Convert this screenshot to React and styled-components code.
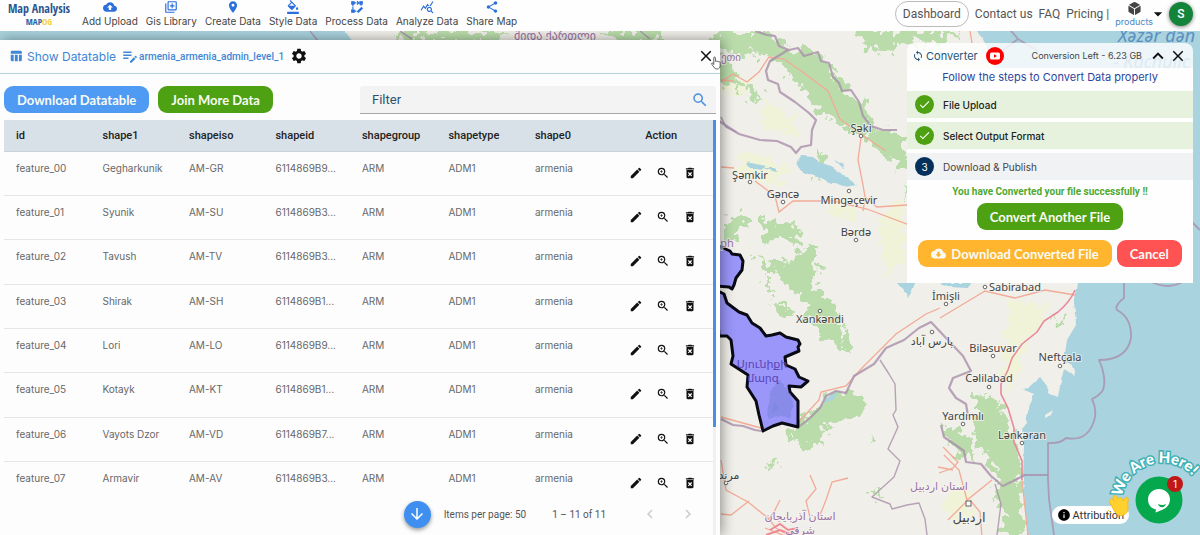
import React from "react";
import styled, { createGlobalStyle } from "styled-components";
import {
	MdCloudUpload,
	MdOutlineLibraryAdd,
	MdLocationOn,
	MdFormatColorFill,
	MdQueryStats,
	MdShare,
	MdTableChart,
	MdEditNote,
	MdSettings,
	MdClose,
	MdSearch,
	MdEdit,
	MdZoomIn,
	MdDeleteForever,
	MdArrowDownward,
	MdChevronLeft,
	MdChevronRight,
	MdArrowDropDown,
	MdLoop,
	MdExpandLess,
	MdCheck,
	MdCloudDownload,
	MdInfo,
} from "react-icons/md";
import { IoCube } from "react-icons/io5";

const columns = ["id", "shape1", "shapeiso", "shapeid", "shapegroup", "shapetype", "shape0"];

const rows = [
	["feature_00", "Gegharkunik", "AM-GR", "6114869B9..."],
	["feature_01", "Syunik", "AM-SU", "6114869B3..."],
	["feature_02", "Tavush", "AM-TV", "6114869B3..."],
	["feature_03", "Shirak", "AM-SH", "6114869B1..."],
	["feature_04", "Lori", "AM-LO", "6114869B9..."],
	["feature_05", "Kotayk", "AM-KT", "6114869B1..."],
	["feature_06", "Vayots Dzor", "AM-VD", "6114869B7..."],
	["feature_07", "Armavir", "AM-AV", "6114869B3..."],
].map((row) => [...row, "ARM", "ADM1", "armenia"]);

const tools = [
	{ label: "Add Upload", icon: <MdCloudUpload /> },
	{ label: "Gis Library", icon: <MdOutlineLibraryAdd /> },
	{ label: "Create Data", icon: <MdLocationOn /> },
	{ label: "Style Data", icon: <MdFormatColorFill /> },
	{ label: "Process Data", icon: <ProcessIcon /> },
	{ label: "Analyze Data", icon: <MdQueryStats /> },
	{ label: "Share Map", icon: <MdShare /> },
];

const steps = [
	{ label: "File Upload", done: true },
	{ label: "Select Output Format", done: true },
	{ label: "Download & Publish", done: false },
];

// [name, label x, label y, dot x, dot y]
const cities = [
	["Şəki", 861, 132, 861, 136],
	["Şəmkir", 750, 179, 750, 182],
	["Gəncə", 783, 198, 783, 202],
	["Mingəçevir", 849, 204, 849, 191],
	["Bərdə", 856, 236, 856, 240],
	["Xankəndi", 820, 323, 820, 311],
	["İmişli", 946, 300, 946, 304],
	["Sabirabad", 1015, 291, 985, 287],
	["Biləsuvar", 993, 352, 993, 356],
	["Neftçala", 1060, 361, 1060, 366],
	["Cəlilabad", 989, 382, 989, 387],
	["Yardımlı", 963, 420, 963, 424],
	["Lənkəran", 1022, 439, 1022, 443],
	["پارس آباد", 932, 345, 932, 332],
	["مرند", 729, 479, 726, 483],
];

export default function App() {
	return (
		<Page>
			<GlobalStyle />
			<Header />
			<Stage>
				<MapCanvas />
				<DataPanel />
				<Converter />
				<ChatCorner />
			</Stage>
		</Page>
	);
}

function Header() {
	return (
		<TopBar>
			<Brand>
				<BrandTitle>Map Analysis</BrandTitle>
				<BrandSub>
					MAP<span>OG</span>
				</BrandSub>
			</Brand>
			<Tools>
				{tools.map((tool) => (
					<ToolButton key={tool.label}>
						{tool.icon}
						{tool.label}
					</ToolButton>
				))}
			</Tools>
			<Links>
				<DashboardLink href="#dashboard">Dashboard</DashboardLink>
				<TopLink href="#contact">Contact us</TopLink>
				<TopLink href="#faq">FAQ</TopLink>
				<TopLink href="#pricing">Pricing |</TopLink>
				<ProductsButton>
					<span>
						<IoCube />
						products
					</span>
					<MdArrowDropDown />
				</ProductsButton>
				<Avatar>S</Avatar>
			</Links>
		</TopBar>
	);
}

function DataPanel() {
	return (
		<Panel>
			<PanelHeader>
				<ShowLink href="#datatable">
					<MdTableChart /> Show Datatable
				</ShowLink>
				<LayerLink href="#layer">
					<MdEditNote /> armenia_armenia_admin_level_1
				</LayerLink>
				<IconButton $size={18} aria-label="Settings">
					<MdSettings />
				</IconButton>
				<PanelClose $size={18} aria-label="Close">
					<MdClose />
					<Pointer viewBox="0 0 16 20">
						<path
							d="M5 12V3.2c0-1.6 2.2-1.6 2.2 0V8c.4-1 2-.9 2.2.2.5-.9 2-.7 2.2.5.6-.8 1.9-.4 1.9.8v4c0 2.5-1.300 4.500-4 4.500-2.500 0-3.500-1-4.500-2.700L2.300 11.500c-.7-1.200.9-2.300 1.700-1.100z"
							fill="#fff"
							stroke="#333"
						/>
					</Pointer>
				</PanelClose>
			</PanelHeader>
			<PanelTools>
				<Button $color="#4f9af2">Download Datatable</Button>
				<Button $color="#4ea112">Join More Data</Button>
				<FilterBox>
					<input aria-label="Filter" placeholder="Filter" />
					<MdSearch />
				</FilterBox>
			</PanelTools>
			<TableArea>
				<TableClip>
					<Table>
						<colgroup>
							{columns.map((name) => (
								<DataCol key={name} />
							))}
							<col />
						</colgroup>
						<thead>
							<tr>
								{columns.map((name) => (
									<th key={name}>{name}</th>
								))}
								<ActionHead>Action</ActionHead>
							</tr>
						</thead>
						<tbody>
							{rows.map((row) => (
								<tr key={row[0]}>
									{row.map((value, i) => (
										<td key={columns[i]}>{value}</td>
									))}
									<td>
										<Actions>
											<IconButton $size={14} aria-label="Edit">
												<MdEdit />
											</IconButton>
											<IconButton $size={14} aria-label="Zoom">
												<MdZoomIn />
											</IconButton>
											<IconButton $size={14} aria-label="Delete">
												<MdDeleteForever />
											</IconButton>
										</Actions>
									</td>
								</tr>
							))}
						</tbody>
					</Table>
				</TableClip>
				<Paginator>
					<DownButton aria-label="Show more">
						<MdArrowDownward />
					</DownButton>
					<span>Items per page: 50</span>
					<span>1 – 11 of 11</span>
					<Pages>
						<IconButton $size={18} disabled aria-label="Previous page">
							<MdChevronLeft />
						</IconButton>
						<IconButton $size={18} disabled aria-label="Next page">
							<MdChevronRight />
						</IconButton>
					</Pages>
				</Paginator>
				<ScrollTrack>
					<ScrollThumb />
				</ScrollTrack>
			</TableArea>
		</Panel>
	);
}

function Converter() {
	return (
		<Card>
			<CardHeader>
				<MdLoop />
				<CardTitle>Converter</CardTitle>
				<VideoBadge aria-label="Watch video">
					<svg viewBox="0 0 18 18" width="18" height="18">
						<rect x="4" y="5.500" width="10" height="7" rx="1.500" fill="#fff" />
						<path d="M8 7.300v3.400l3-1.700z" fill="#f00" />
					</svg>
				</VideoBadge>
				<Quota>Conversion Left - 6.23 GB</Quota>
				<IconButton $size={22} aria-label="Collapse">
					<MdExpandLess />
				</IconButton>
				<IconButton $size={18} aria-label="Close converter">
					<MdClose />
				</IconButton>
			</CardHeader>
			<CardBody>
				<Hint>Follow the steps to Convert Data properly</Hint>
				<Steps>
					{steps.map((step, i) => (
						<Step key={step.label} $done={step.done}>
							<StepMark $done={step.done}>{step.done ? <MdCheck /> : i + 1}</StepMark>
							{step.label}
						</Step>
					))}
				</Steps>
				<Success>You have Converted your file successfully !!</Success>
				<Button $color="#4ea112">Convert Another File</Button>
				<ButtonRow>
					<Button $color="#ffb52e">
						<MdCloudDownload />
						Download Converted File
					</Button>
					<Button $color="#ff5252">Cancel</Button>
				</ButtonRow>
			</CardBody>
		</Card>
	);
}

function ChatCorner() {
	return (
		<Corner>
			<Attribution>
				<MdInfo />
				Attribution
			</Attribution>
			<ChatButton aria-label="Open chat">
				<svg viewBox="0 0 96 88" width="96" height="88" overflow="visible">
					<defs>
						<path id="arc" d="M18 50 A 41 41 0 0 1 98 46" />
					</defs>
					<ArcText>
						<textPath href="#arc">We Are Here!</textPath>
					</ArcText>
					<g fill="#ffd02e" stroke="#f4bd1c" transform="translate(3 1)">
						<path d="M3 52c1-2 3-1 4 1l-1-3c0-3 3-3 4-1l1 2c1-2 3-2 4 0l1 2 2-3c2-2 4 0 3 3-1 5 2 10-3 13-4 3-8 1-10-2l-5-9c-1-1-1-2 0-3z" />
						<path d="M1 62l4 4M1 66l2 2" fill="none" />
					</g>
					<circle cx="55" cy="53" r="23.500" fill="#06a84d" />
					<path d="M55 42c6 0 11 4.500 11 10.500 0 5-3.500 8.500-7 10-2.500 1.200-4.500 2-7.500 3l.5-3c-4.500-.8-8-4.500-8-10C44 46.500 49 42 55 42z" fill="#fff" />
					<path d="M54 57c3 1.500 6 1.300 8 0-1 4-6.500 4.500-8 0z" fill="#06a84d" />
					<circle cx="71" cy="37" r="8" fill="#c01818" />
					<BadgeText x="71" y="41">
						1
					</BadgeText>
				</svg>
			</ChatButton>
		</Corner>
	);
}

function ProcessIcon() {
	return (
		<svg viewBox="0 0 24 24" fill="none" stroke="currentColor" strokeWidth="2">
			<path d="M5 7v10M7 5h10M7 19h4M19 7v3" strokeDasharray="4 1" />
			<path d="M12 2l3 3-3 3" />
			<path d="M13 21l8-8" strokeWidth="4" />
			<g fill="currentColor" stroke="none">
				<rect x="2" y="2" width="6" height="6" />
				<rect x="16" y="2" width="6" height="6" />
				<rect x="2" y="16" width="6" height="6" />
			</g>
		</svg>
	);
}

function MapCanvas() {
	return (
		<MapSvg viewBox="0 31 1200 504" preserveAspectRatio="xMinYMin slice">
			<defs>
				<filter id="ragged" x="-5%" y="-5%" width="110%" height="110%">
					<feTurbulence type="fractalNoise" baseFrequency="0.11" numOctaves="3" seed="4" />
					<feDisplacementMap in="SourceGraphic" scale="26" xChannelSelector="R" yChannelSelector="G" />
				</filter>
				<filter id="coast">
					<feTurbulence type="fractalNoise" baseFrequency="0.12" numOctaves="2" seed="8" />
					<feDisplacementMap in="SourceGraphic" scale="4" xChannelSelector="R" yChannelSelector="G" />
				</filter>
			</defs>
			<rect y="31" width="1200" height="504" fill="#f0efe9" />
			{/* pale farmland */}
			<g fill="#f1f3d8" filter="url(#ragged)">
				<path d="M760 95l30 20 10 20-35-5zM830 200l30 5-5 15-25-5zM1010 300l40 5-20 35-20 55-10-20zM721 70l30 10-5 15-25-5zM940 505l25-25 10 30-20 20z" />
				<path d="M745 150l50 20-20 15-40-10zM880 215l26-15v60l-20 20z" />
			</g>
			{/* forests */}
			<g fill="#b9dcaa" filter="url(#ragged)">
				<path d="M395 31h115l-20 12h-85zM600 31h60v10h-40zM712 31h55l20 16 32 6 16 19 12 20 20 12 6 22 32 10v35l-25-20-22-18-30-14-26-28-20-28-24-10-18 2-24-8z" />
				<path d="M855 31h110l-30 14-30-4-20 12-20-8zM721 52l10 10 12 30-22-8z" />
				<path d="M745 92l14-2 4 8-12 3zM722 222l22-10 6 8-10 18-18 4zM760 215l15 8 22 2-3 14-22-2-2 8-10-4zM793 233l8-2-2 14-6-4z" />
				<path d="M754 258l38 4 18-18 8 20-4 20 20 20 14 30-5 12-20-10-12-16-10-20-16-18zM764 270l10 24-6-2zM770 300l24 10-8 10zM816 180l8-25-6-6-4 10zM825 325l22 10 4 16-14-6-10-8z" />
				<path d="M790 430l22-18 20-16 22-5 10 8 2 12-18 8-20 6-12 22-12 2-20-18zM870 434l8 2-6 3zM767 465l8-4 2 8zM903 190l4-5v15z" />
				<path d="M975 392l20 6 10 20 12 20 4 42-14 4-12-12-16-26-4-18zM945 425l18 8 16 30-20-8-14-18zM995 484h26l4 51h-22l2-22-8-10zM872 491l10 2-6 5zM1054 315l10 3-5 8z" />
			</g>
			<g fill="#a9d3de">
				<g filter="url(#coast)">
					<path d="M974 25L985 43 1077 283 1074 300 1076 325 1067 340 1064 360 1072 364 1075 376 1064 369 1060 385 1058 397 1048 393 1047 386 1040 377 1028 388 1022 389 1034 394 1030 404 1028 412 1022 428 1024 445 1023 480 1028 545H1210V25z" />
					<path d="M-5 25h345l14 18H-5z" />
					<path d="M801 156l12 1 8 6 12 4 10 8 14 10-14 2-18-7-22-8-8-8zM746 162l20 4-4 4-12-2zM763 168h13v4zM835 160l10 4-2 4zM897 283h18l-3 8-4 7-5-8zM940 283h30l-2 5-18-1z" />
				</g>
				<path d="M828 397l10-5-5 8-10 3zM774 402l5 6-7 5z" />
			</g>
			<path d="M1045 415l8-5-2 5-6 3zM1019 424l6-8 2 7-5 6z" fill="#f0efe9" />
			{/* roads */}
			<g fill="none" stroke="#f3aa97" strokeWidth="1.300">
				<path d="M721 82l12-8 14 8 12-10 10-15 15 2 20 14 24 18 12 28 16 12 30 20M861 138l-3 22 5 25 2 12 12 10 30-2" />
				<path d="M721 167l13 1M755 181l20 15 4 16 14-11h40l34 8 40 15h10M863 211l2-12" />
				<path d="M794 427l25-27 2-8 25-6 16-18 34-34 30-20 14-6M940 318l25-15 20-12 30 7 30-8 30 5" />
				<path d="M721 417l40 11M721 460l5 30 22 12 20 16 8 10 12 7M721 514l10 1 18-14M780 500l-6 12-6 8M810 475l6 14-10 12 4 16M848 478l-16 4-6 18-6 15M943 447l15 15-5 6-14 5M953 470l-15-3M944 455l15 15 8 30 25-20M970 500l10 12 2 25M968 500l-20 20M1022 480l6 55" />
				<path d="M970 31l2 12M721 80l13 1M765 528l18 7" />
			</g>
			<path d="M1075 290Q1070 302 1058 312L1044 321 1037 332 1022 344 1012 358 1008 370 1001 384 1001 394 1008 408 1014 428 1014 442 1022 461V480" fill="none" stroke="#e8899a" strokeWidth="1.600" />
			<g stroke="#ef8a94" fill="none">
				<path d="M770 530l10-6 8 6 10-2M766 535l14-5 14 5" strokeWidth="2" />
			</g>
			{/* borders */}
			<g fill="none" stroke="#a98fab" strokeOpacity="0.8" strokeWidth="2.200" strokeLinejoin="round">
				<path d="M755 31l12 4 8 1 4 10 10 4 9-2 6 8 14-4 3 9 8 2 4 14 6 6 3 8 9-1 8 12 4 14 8 10 12 4h14" />
				<path d="M788 50l-18 11-4 10 2 9 10 4 2 8 15 10 14 11 7 7-4 10-1 15-10 2-5 6-5-6-14-6-17-1-21-6-20-13" />
				<path d="M721 419l12 6 10 1 12 4 6 1M800 426l10-8 10-10 6-12 10-5 10 2 8-17 20-12 12-16 18-8 15-12 12-6 32 34 8 15-18 7-4 10 7 10 10 6 2 12M941 425l3 12 20 14 2 11 15 2 10 12 12 10 12-6 10-5h23" />
				<path d="M1124 283v15q-10 8-7 12 15 8 14 28-4 22-32 22 8 18 4 30-4 6-11 9 8 16-3 32-8 10-23 7-6 6-18 5v36l1 20 5 36M1006 25l12 14-28 21M1018 39l20 12M1150 281q18 10 34 0M1190 220l10 10" strokeWidth="1.800" />
				<path d="M880 360l9 14 6 10 1 26-3 5 5 12-10 22 12 12-6 16-22 20 18 7 2 5 15-4 12-2 6 16 2 16M995 484l6 20-4 31" strokeWidth="1.400" />
				<path d="M721 117l5 10 10 5M640 31l10 8M310 31l8 10M400 31l12 8" strokeWidth="1.600" />
			</g>
			{/* selected layer */}
			<g fill="#7e78ff" fillOpacity="0.750" stroke="#0a0a14" strokeWidth="3" strokeLinejoin="round">
				<path d="M716 245l5 2 9 4 2 3 8 1 3 6-1 9-6 8-2 7-2 4-3-2-13-1z" />
				<path d="M716 290l8 4 3 9 12 9 8 3 5 8 8 5 6 8 6-1 8-2 6 4 12 3 2 4-2 3 1 4-14 6 1 8 9 4 4 8 9 4-7 6-12-1 1 6 8 9v26l-16-4-9 3-10 5-4-16-3-14-9-14 1-12-17-11 2-8-2-16-4-4h-8z" />
			</g>
			<path d="M770 393l10-12 8 8 6 16-4 14-10-4-12 4z" fill="#6f7bd0" fillOpacity="0.4" filter="url(#coast)" />
			<PlaceDots>
				{cities.map(([name, , , x, y]) => (
					<circle key={name} cx={x} cy={y} r="1.800" />
				))}
				<rect x="966" y="501" width="5" height="5" />
			</PlaceDots>
			{cities.map(([name, x, y]) => (
				<MapLabel key={name} x={x} y={y}>
					{name}
				</MapLabel>
			))}
			<MapLabel $size={13} x="969" y="522">
				اردبیل
			</MapLabel>
			<MapLabel $tone="#9a72a5" x="939" y="490">
				استان اردبیل
			</MapLabel>
			<MapLabel $tone="#9a72a5" $size={11} x="800" y="520">
				استان آذربایجان
			</MapLabel>
			<MapLabel $tone="#9a72a5" $size={11} x="800" y="534">
				شرقی
			</MapLabel>
			<MapLabel $tone="#9a72a5" $size={12} x="555" y="40">
				შიდა ქართლი
			</MapLabel>
			<MapLabel $tone="#9a72a5" x="731" y="61">
				ეთი
			</MapLabel>
			<MapLabel $tone="#9a72a5" x="727" y="247">
				ph
			</MapLabel>
			<LayerLabel x="762" y="368">
				Սյունիքի
			</LayerLabel>
			<LayerLabel x="763" y="382">
				մարզ
			</LayerLabel>
			<SeaLabel x="1118" y="42">
				Xəzər dən
			</SeaLabel>
			<SeaLabel x="1113" y="68">
				- Kachulic
			</SeaLabel>
		</MapSvg>
	);
}

const GlobalStyle = createGlobalStyle`
	* {
		box-sizing: border-box;
	}
	body {
		margin: 0;
		font-family: Inter, "Noto Sans", sans-serif;
		overflow: hidden;
	}
	button {
		font: inherit;
		color: inherit;
		padding: 0;
		border: 0;
		background: none;
		cursor: pointer;
	}
	a {
		color: inherit;
		text-decoration: none;
	}
	svg {
		flex: none;
	}
`;

const Page = styled.div`
	display: flex;
	flex-direction: column;
	height: 100vh;
`;

const TopBar = styled.header`
	display: flex;
	align-items: center;
	height: 31px;
	padding: 0 7px 3px 8px;
	background: #fefefe;
`;

const Brand = styled.div`
	display: flex;
	flex-direction: column;
	align-items: center;
	width: 62px;
	margin-right: 12px;
	font-family: "Liberation Sans Narrow", "Open Sans Condensed", Roboto, sans-serif;
	font-weight: 700;
	white-space: nowrap;
`;

const BrandTitle = styled.span`
	color: #2a5590;
	font-size: 12px;
	line-height: 15px;
`;

const BrandSub = styled.span`
	color: #2a62a8;
	font-size: 9px;
	line-height: 12px;

	span {
		color: #f5cf35;
	}
`;

const Tools = styled.nav`
	display: flex;
	gap: 8px;
`;

const ToolButton = styled.button`
	display: flex;
	flex-direction: column;
	align-items: center;
	gap: 1px;
	color: #444;
	font: 10px/13px Inter, sans-serif;
	white-space: nowrap;

	svg {
		width: 14px;
		height: 14px;
		color: #2b6fdc;
	}
`;

const Links = styled.nav`
	display: flex;
	align-items: center;
	gap: 6px;
	margin-left: auto;
	color: #555;
	font: 12px/16px Roboto, sans-serif;
	white-space: nowrap;
`;

const TopLink = styled.a``;

const DashboardLink = styled(TopLink)`
	padding: 4px 7px;
	border: 1px solid #bbb;
	border-radius: 13px;
`;

const ProductsButton = styled.button`
	display: flex;
	align-items: center;
	color: #111;

	span {
		display: flex;
		flex-direction: column;
		align-items: center;
		color: #4a86c8;
		font: 9px/12px Inter, sans-serif;
	}

	span svg {
		width: 15px;
		height: 15px;
		color: #444;
	}

	> svg {
		width: 20px;
		height: 20px;
		margin: 0 -5px;
	}
`;

const Avatar = styled.button`
	width: 24px;
	height: 24px;
	border-radius: 50%;
	background: #15843b;
	box-shadow: 0 1px 4px rgba(0, 0, 0, 0.5);
	color: #fff;
	font-weight: 500;
`;

const Stage = styled.main`
	position: relative;
	display: grid;
	flex: 1;
	grid-template-columns: minmax(0, 3fr) minmax(0, 2fr);
	grid-template-rows: minmax(0, 1fr);
	min-height: 0;
	overflow: hidden;
`;

// the map lies under every panel of the stage
const MapSvg = styled.svg`
	position: absolute;
	inset: 0;
	width: 100%;
	height: 100%;
`;

const MapLabel = styled.text`
	fill: ${(props) => props.$tone || "#444"};
	font: ${(props) => props.$size || 11}px "Noto Sans", "DejaVu Sans", sans-serif;
	text-anchor: middle;
	paint-order: stroke;
	stroke: #f6f5f1;
	stroke-opacity: 0.7;
	stroke-width: 2px;
`;

const LayerLabel = styled.text`
	fill: #5a45b8;
	font: 11px "DejaVu Sans", sans-serif;
	text-anchor: middle;
`;

const SeaLabel = styled.text`
	fill: #5b8fc0;
	font: italic 18px "Noto Sans", sans-serif;
`;

const PlaceDots = styled.g`
	fill: #fff;
	stroke: #666;
	stroke-width: 1px;
`;

const Panel = styled.section`
	position: relative;
	display: flex;
	flex-direction: column;
	margin-top: 9px;
	background: #fdfdfd;
	box-shadow: 2px 0 12px rgba(0, 0, 0, 0.4);
`;

const PanelHeader = styled.div`
	display: flex;
	align-items: center;
	height: 34px;
	padding: 0 5px 1px 9px;
	border-bottom: 1px solid #b4cfdf;
	color: #3f87d6;
`;

const ShowLink = styled.a`
	display: flex;
	align-items: center;
	gap: 4px;
	margin-right: 5px;
	font-size: 12px;

	svg {
		width: 14px;
		height: 14px;
	}
`;

const LayerLink = styled.a`
	display: flex;
	align-items: center;
	margin-right: 6px;
	font: 500 10px Roboto, sans-serif;

	svg {
		width: 18px;
		height: 18px;
	}
`;

const IconButton = styled.button`
	display: flex;
	color: #111;

	svg {
		width: ${(props) => props.$size}px;
		height: ${(props) => props.$size}px;
	}

	&:disabled {
		color: #ccc;
	}
`;

const PanelClose = styled(IconButton)`
	position: relative;
	margin-left: auto;
`;

const Pointer = styled.svg`
	&& {
		position: absolute;
		top: 8px;
		left: 13px;
		width: 12px;
		height: 16px;
	}
`;

const PanelTools = styled.div`
	display: flex;
	gap: 9px;
	padding: 12px 4px 6px;
`;

const Button = styled.button`
	display: flex;
	align-items: center;
	gap: 5px;
	height: 27px;
	padding: 0 13px;
	border-radius: 9px;
	background: ${(props) => props.$color};
	color: #f8fbf4;
	font: 700 13px Lato, sans-serif;
	white-space: nowrap;

	svg {
		width: 15px;
		height: 15px;
	}
`;

const FilterBox = styled.label`
	display: flex;
	align-items: center;
	width: 50%;
	height: 28px;
	margin-left: auto;
	padding: 0 7px 0 12px;
	border-bottom: 1px solid #a8a8a8;
	border-radius: 3px 3px 0 0;
	background: #f3f3f3;
	color: #4a90e2;

	input {
		flex: 1;
		min-width: 0;
		padding: 0;
		border: 0;
		outline: 0;
		background: none;
		font: 13px Roboto, sans-serif;
	}

	input::placeholder {
		color: #2c5270;
		opacity: 1;
	}

	svg {
		width: 18px;
		height: 18px;
	}
`;

const TableArea = styled.div`
	display: grid;
	flex: 1;
	grid-template-columns: minmax(0, 1fr) 3px;
	grid-template-rows: minmax(0, 1fr) 42px;
	min-height: 0;
	padding: 0 4px;
`;

const TableClip = styled.div`
	overflow: hidden;
`;

const Table = styled.table`
	width: 100%;
	border-collapse: collapse;
	table-layout: fixed;
	text-align: left;

	th {
		height: 31px;
		padding: 0 0 0 12px;
		border-bottom: 1px solid #c9d3d9;
		background: #d8e0e8;
		color: #222;
		font: 500 11px Roboto, sans-serif;
	}

	td {
		height: 44px;
		padding: 9px 0 0 12px;
		border-bottom: 1px solid #e6e6e6;
		color: #686868;
		font-size: 10px;
		line-height: 14px;
		vertical-align: top;
		white-space: nowrap;
	}

	tr:nth-child(3n) td {
		height: 45px;
	}

	td:last-child {
		padding: 14px 0 0;
	}
`;

const DataCol = styled.col`
	width: 12.2%;
`;

const ActionHead = styled.th`
	&& {
		padding: 0;
		text-align: center;
	}
`;

const Actions = styled.div`
	display: flex;
	justify-content: center;
	gap: 13px;
	padding-left: 4px;
`;

const Paginator = styled.div`
	display: flex;
	grid-row: 2;
	align-items: center;
	justify-content: flex-end;
	gap: 26px;
	padding-right: 16px;
	color: #555;
	font: 10px Roboto, sans-serif;
`;

const DownButton = styled.button`
	display: flex;
	align-items: center;
	justify-content: center;
	width: 27px;
	height: 27px;
	margin-right: -13px;
	border-radius: 50%;
	background: #3f8ff0;
	box-shadow: 0 2px 4px rgba(0, 0, 0, 0.4);
	color: #fff;
	font-size: 18px;
`;

const Pages = styled.div`
	display: flex;
	gap: 20px;
	margin-left: 9px;
`;

const ScrollTrack = styled.div`
	grid-row: 1 / 3;
	grid-column: 2;
	background: #f0f0f0;
`;

const ScrollThumb = styled.div`
	height: 74%;
	background: #4a90e2;
`;

const Card = styled.section`
	position: relative;
	align-self: start;
	justify-self: end;
	width: 286px;
	margin: 12px 7px 0 0;
`;

const CardHeader = styled.div`
	display: flex;
	align-items: center;
	height: 25px;
	padding: 0 6px 0 5px;
	border-radius: 8px 8px 0 0;
	background: rgba(255, 255, 255, 0.8);
	color: #24557c;

	> svg {
		width: 12px;
		height: 12px;
	}
`;

const CardTitle = styled.h2`
	margin: 0 8px 0 2px;
	font-size: 11px;
	font-weight: 400;
`;

const VideoBadge = styled.button`
	display: flex;
	border-radius: 50%;
	background: #f00;
`;

const Quota = styled.span`
	margin: 0 5px 0 auto;
	color: #444;
	font-size: 9px;
`;

const CardBody = styled.div`
	display: flex;
	flex-direction: column;
	align-items: center;
	padding-bottom: 16px;
	background: #fefefe;
`;

const Hint = styled.p`
	margin: 0;
	color: #2c469c;
	font-size: 11px;
	line-height: 18px;
`;

const Steps = styled.ol`
	display: flex;
	flex-direction: column;
	gap: 4px;
	width: 100%;
	margin: 5px 0 0;
	padding: 0;
	list-style: none;
`;

const Step = styled.li`
	display: flex;
	align-items: center;
	gap: 9px;
	height: 27px;
	padding-left: 8px;
	background: ${(props) => (props.$done ? "#e6f2de" : "#f1f2f4")};
	color: ${(props) => (props.$done ? "#222" : "#444")};
	font-size: 10px;
	font-weight: ${(props) => (props.$done ? 500 : 400)};
`;

const StepMark = styled.span`
	display: flex;
	align-items: center;
	justify-content: center;
	width: 19px;
	height: 19px;
	border-radius: 50%;
	background: ${(props) => (props.$done ? "#4ea112" : "#06305c")};
	color: #fff;

	svg {
		width: 13px;
		height: 13px;
	}
`;

const Success = styled.p`
	margin: 4px 0 3px;
	color: #4ea832;
	font: 700 10px/16px Roboto, sans-serif;
`;

const ButtonRow = styled.div`
	display: flex;
	gap: 5px;
	margin-top: 10px;
`;

// floats over the bottom right of the map
const Corner = styled.aside`
	position: absolute;
	right: 0;
	bottom: 0;
	display: flex;
	align-items: flex-end;
`;

const Attribution = styled.button`
	display: flex;
	align-items: center;
	gap: 1px;
	height: 18px;
	margin: 0 -25px 11px 0;
	padding: 0 5px;
	border-radius: 9px;
	background: #fff;
	color: #333;
	font: 11px Roboto, sans-serif;

	svg {
		width: 14px;
		height: 14px;
		color: #000;
	}
`;

const ChatButton = styled.button`
	position: relative;
	display: flex;
`;

const ArcText = styled.text`
	fill: #fff;
	font: 900 15px Lato, sans-serif;
	paint-order: stroke;
	stroke: #3fb0b5;
	stroke-width: 3px;
`;

const BadgeText = styled.text`
	fill: #fff;
	font: 10px Inter, sans-serif;
	text-anchor: middle;
`;
